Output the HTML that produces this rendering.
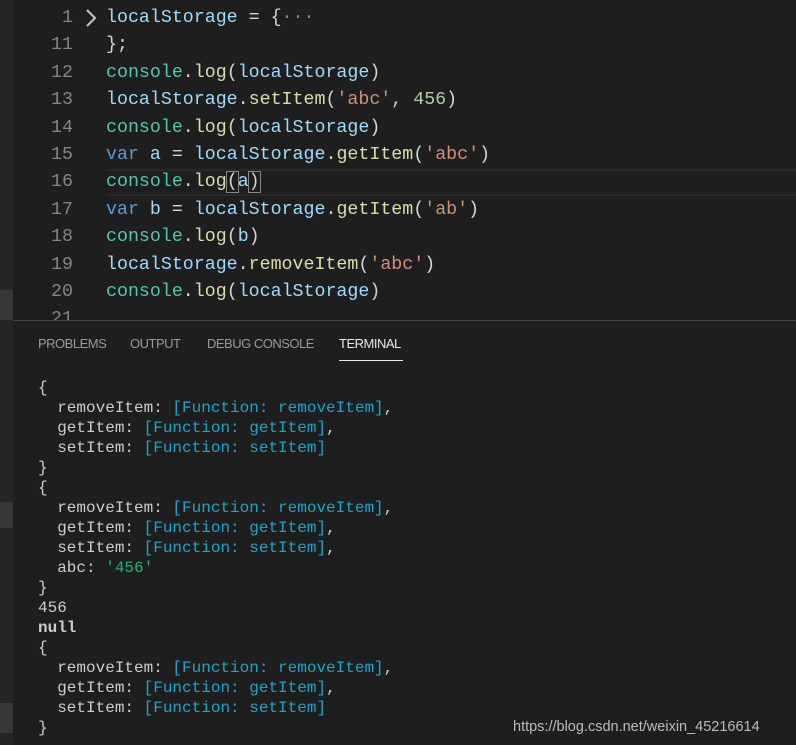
<!DOCTYPE html>
<html><head><style>
body{margin:0;width:796px;height:745px;background:#1e1e1e;overflow:hidden;position:relative;font-family:"Liberation Mono",monospace}
.strip{position:absolute;left:0;top:0;width:13px;height:745px;background:#252526}
.pt{position:absolute;left:0;width:13px;background:#373737}
.ln{position:absolute;left:13px;width:60px;text-align:right;color:#858585;font-size:18.3px;line-height:27.4px}
.code{position:absolute;left:106px;font-size:18.3px;line-height:27.4px;white-space:pre;color:#d4d4d4}
.v{color:#9cdcfe}.f{color:#dcdcaa}.c{color:#4ec9b0}.s{color:#ce9178}.n{color:#b5cea8}.k{color:#569cd6}
.cur{position:absolute;left:106px;right:0;top:169px;height:27px;border-top:2px solid #282828;border-bottom:2px solid #282828;box-sizing:border-box}
.panel{position:absolute;left:13px;top:320px;right:0;bottom:0;background:#1e1e1e;border-top:1px solid #444}
.tab{position:absolute;top:15px;font-family:"Liberation Sans",sans-serif;font-size:13px;color:#999;letter-spacing:-0.5px}
.term{position:absolute;left:38px;top:378px;font-size:16px;line-height:20px;white-space:pre;color:#cccccc}
.fn{color:#11a8cd}.g{color:#0dbc79}
.wm{position:absolute;left:513px;top:719px;font-family:"Liberation Sans",sans-serif;font-size:14.5px;color:#bbb}
</style></head><body>
<div class="strip"></div>
<div class="pt" style="top:290px;height:30px"></div>
<div class="cur"></div>
<div class="ln" style="top:5px">1<br>11<br>12<br>13<br>14<br>15<br>16<br>17<br>18<br>19<br>20<br>21</div>
<svg style="position:absolute;left:85px;top:8px" width="14" height="20"><path d="M2 2 L10 10 L2 18" stroke="#c5c5c5" stroke-width="2" fill="none"/></svg>
<div class="code" style="top:5px"><span class="v">localStorage</span> = {<span style="color:#888">···</span>
};
<span class="c">console</span>.<span class="f">log</span>(<span class="v">localStorage</span>)
<span class="v">localStorage</span>.<span class="f">setItem</span>(<span class="s">'abc'</span>, <span class="n">456</span>)
<span class="c">console</span>.<span class="f">log</span>(<span class="v">localStorage</span>)
<span class="k">var</span> <span class="v">a</span> = <span class="v">localStorage</span>.<span class="f">getItem</span>(<span class="s">'abc'</span>)
<span class="c">console</span>.<span class="f">log</span><span style="outline:1px solid #888">(</span><span class="v">a</span><span style="outline:1px solid #888">)</span>
<span class="k">var</span> <span class="v">b</span> = <span class="v">localStorage</span>.<span class="f">getItem</span>(<span class="s">'ab'</span>)
<span class="c">console</span>.<span class="f">log</span>(<span class="v">b</span>)
<span class="v">localStorage</span>.<span class="f">removeItem</span>(<span class="s">'abc'</span>)
<span class="c">console</span>.<span class="f">log</span>(<span class="v">localStorage</span>)</div>
<div class="panel">
<span class="tab" style="left:25px">PROBLEMS</span>
<span class="tab" style="left:117px">OUTPUT</span>
<span class="tab" style="left:194px">DEBUG CONSOLE</span>
<span class="tab" style="left:326px;color:#e7e7e7">TERMINAL</span>
<div style="position:absolute;left:326px;top:39px;width:64px;height:1px;background:#e7e7e7"></div>
</div>
<div class="strip" style="top:321px;height:424px"></div>
<div class="pt" style="top:502px;height:26px"></div>
<div class="pt" style="top:703px;height:30px"></div>
<div class="term">{
  removeItem: <span class="fn">[Function: removeItem]</span>,
  getItem: <span class="fn">[Function: getItem]</span>,
  setItem: <span class="fn">[Function: setItem]</span>
}
{
  removeItem: <span class="fn">[Function: removeItem]</span>,
  getItem: <span class="fn">[Function: getItem]</span>,
  setItem: <span class="fn">[Function: setItem]</span>,
  abc: <span class="g">'456'</span>
}
456
<b>null</b>
{
  removeItem: <span class="fn">[Function: removeItem]</span>,
  getItem: <span class="fn">[Function: getItem]</span>,
  setItem: <span class="fn">[Function: setItem]</span>
}</div>
<div class="wm">https://blog.csdn.net/weixin_45216614</div>
</body></html>
